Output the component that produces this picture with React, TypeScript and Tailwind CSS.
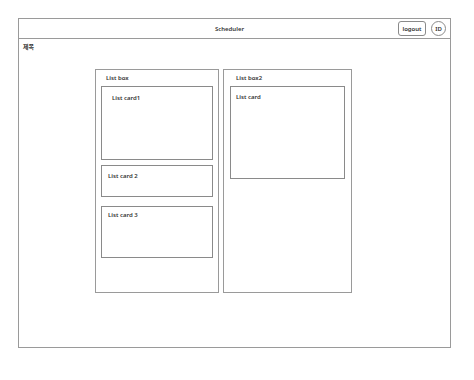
export default function App() {
  const f = { fontFamily: '"Noto Sans", "Noto Sans CJK KR", sans-serif' };
  return (
    <div className="w-[474px] h-[380px] bg-white pt-[18px] pl-[18px]" style={f}>
      <div className="w-[433px] h-[330px] border border-[#9a9a9a] flex flex-col text-[6px] font-semibold text-[#333] leading-none">
        <div className="h-[20px] border-b border-[#9a9a9a] relative flex items-center justify-center">
          <span className="ml-[-10px]">Scheduler</span>
          <div className="absolute right-[4px] top-[2px] flex items-center gap-[5px]">
            <div className="w-[28px] h-[15px] border border-[#8a8a8a] rounded-[3px] flex items-center justify-center">logout</div>
            <div className="w-[15px] h-[15px] border border-[#8a8a8a] rounded-full flex items-center justify-center">ID</div>
          </div>
        </div>
        <div className="pl-[4px] pt-[5px] h-[30px]">제목</div>
        <div className="flex gap-[4px] pl-[76px]">
          <div className="w-[124px] h-[224px] border border-[#9a9a9a] px-[5px]">
            <div className="h-[16px] pl-[5px] pt-[5px]">List box</div>
            <div className="h-[74px] border border-[#8a8a8a] pl-[10px] pt-[8px]">List card1</div>
            <div className="h-[32px] mt-[5px] border border-[#8a8a8a] pl-[6px] pt-[7px]">List card 2</div>
            <div className="h-[52px] mt-[9px] border border-[#8a8a8a] pl-[6px] pt-[5px]">List card 3</div>
          </div>
          <div className="w-[129px] h-[224px] border border-[#9a9a9a] px-[6px]">
            <div className="h-[16px] pl-[6px] pt-[5px]">List box2</div>
            <div className="h-[93px] border border-[#8a8a8a] pl-[5px] pt-[7px]">List card</div>
          </div>
        </div>
      </div>
    </div>
  );
}
